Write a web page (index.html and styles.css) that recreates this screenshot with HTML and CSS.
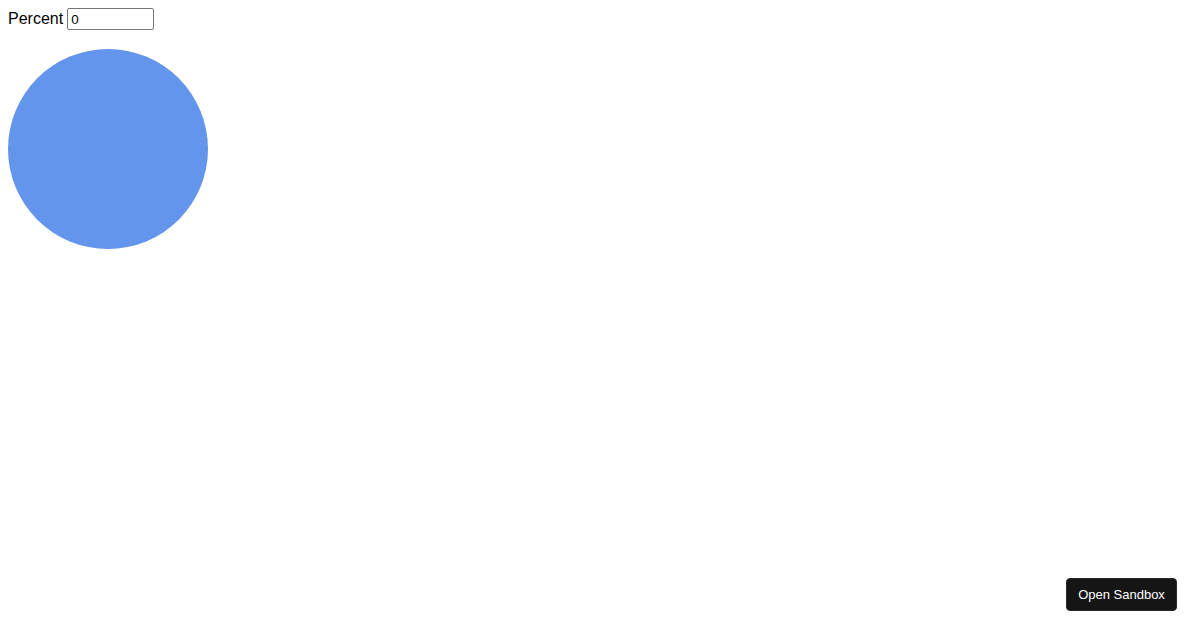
FILE: index.html
```html
<!DOCTYPE html>
<html>
<head>
<meta charset="utf-8">
<link rel="stylesheet" href="styles.css">
</head>
<body>
<div class="row">
  <label class="label">Percent</label>
  <input class="field" type="text" value="0">
</div>
<svg class="pie" width="200" height="200" viewBox="0 0 200 200">
  <circle cx="100" cy="100" r="100" fill="#6495ed"/>
</svg>
<button class="sandbox">Open Sandbox</button>
</body>
</html>
```
FILE: styles.css
```css
body {
  margin: 8px;
  font-family: "Liberation Sans", Arial, sans-serif;
  font-size: 16px;
  color: #000;
  background: #fff;
}
.row {
  display: flex;
  align-items: baseline;
  gap: 4px;
  height: 22px;
}
.label {
  line-height: 18px;
}
.field {
  width: 87px;
  height: 22px;
  box-sizing: border-box;
  font-family: "Liberation Sans", Arial, sans-serif;
  font-size: 13.33px;
  padding: 1px 3px;
  border: 1px solid #767676;
  border-radius: 2px;
  margin: 0;
}
.pie {
  display: block;
  margin-top: 19px;
}
.sandbox {
  position: fixed;
  right: 23px;
  bottom: 19px;
  width: 111px;
  height: 33px;
  background: #151515;
  color: #fff;
  border: 1px solid #2a2a2a;
  border-radius: 4px;
  font-family: "Liberation Sans", Arial, sans-serif;
  font-size: 13px;
  padding: 0;
}
```
